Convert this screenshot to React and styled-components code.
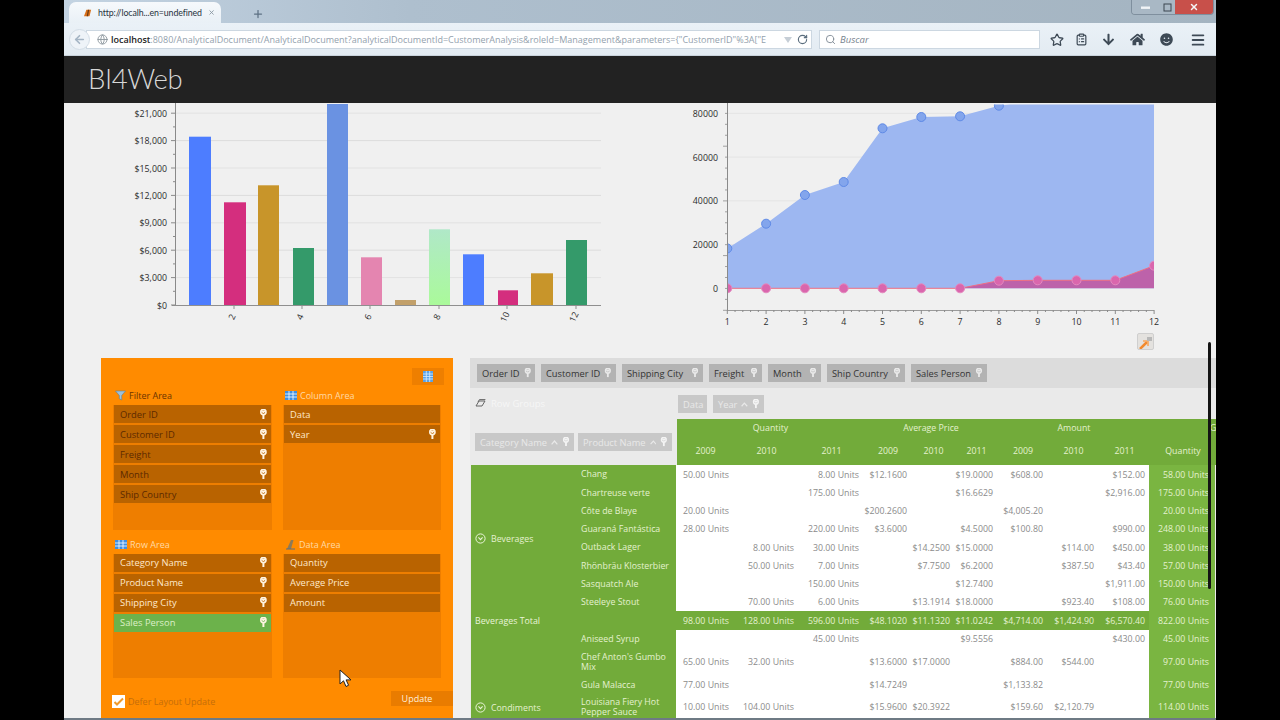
import React from 'react';
import styled, { createGlobalStyle } from 'styled-components';
import { ArrowLeft, ClipboardList, Globe, Menu, RotateCw, Search, Star, X, Plus } from 'lucide-react';
import { FaArrowDown, FaHome, FaSmile } from 'react-icons/fa';

const GREEN = '#72ab3a';
const UI_FONT = '"Open Sans", "Noto Sans", sans-serif';

const GlobalStyle = createGlobalStyle`
  html, body { margin: 0; height: 100%; background: #000; }
  #root { height: 100%; }
  * { box-sizing: border-box; }
`;

const Screen = styled.div`
  display: flex;
  justify-content: center;
  width: 1280px;
  height: 720px;
  overflow: hidden;
  background: #000;
  font-family: ${UI_FONT};
`;

const Stage = styled.div`
  display: flex;
  flex-direction: column;
  width: 1152px;
  height: 720px;
  background: #f0f0f0;
`;

/* browser chrome */
const TitleBar = styled.div`
  display: flex;
  align-items: flex-end;
  height: 23px;
  padding-left: 5px;
  background: linear-gradient(90deg, #c3d3e2 0%, #aebfce 30%, #a4b4c1 100%);
`;

const Tab = styled.div`
  display: flex;
  align-items: center;
  gap: 6px;
  width: 152px;
  height: 21px;
  padding: 0 6px 0 15px;
  border-radius: 7px 7px 0 0;
  background: linear-gradient(#f6f9fc, #e9f0f6);
  font-family: Lato, ${UI_FONT};
  font-size: 8.8px;
  letter-spacing: -0.1px;
  color: #26323c;
  white-space: nowrap;
`;

const TabTitle = styled.span`
  flex: 1;
`;

const NewTab = styled.div`
  display: flex;
  align-items: center;
  margin: 0 0 3px 31px;
  color: #5d7184;
`;

const WindowButtons = styled.div`
  display: flex;
  align-self: flex-start;
  height: 15px;
  margin-left: auto;
  margin-right: 2px;
  border-radius: 0 0 4px 4px;
  border: 1px solid #7f8f9e;
  border-top: 0;
  overflow: hidden;
`;

const WindowButton = styled.div`
  display: flex;
  align-items: center;
  justify-content: center;
  width: ${(p) => p.$w}px;
  background: ${(p) => p.$bg};
  color: #f4f6f8;
`;

const NavBar = styled.div`
  display: flex;
  align-items: center;
  height: 33px;
  padding: 1px 0 0 5px;
  background: linear-gradient(#eaf1f7, #e3ebf2);
  border-bottom: 1px solid #c9d3dc;
`;

const BackButton = styled.div`
  display: flex;
  align-items: center;
  justify-content: center;
  width: 21px;
  height: 21px;
  border-radius: 50%;
  border: 1px solid #d3dde6;
  background: #eef3f8;
  color: #a4b4c4;
  z-index: 1;
`;

const UrlBox = styled.div`
  display: flex;
  align-items: center;
  gap: 3px;
  width: 726px;
  height: 19px;
  margin-left: -4px;
  padding: 0 3px 0 10px;
  background: #fff;
  border: 1px solid #ccd7e1;
  color: #93a1ad;
  font-size: 9px;
  white-space: nowrap;
`;

const UrlText = styled.div`
  flex: 1;
`;

const UrlHost = styled.span`
  color: #222;
  font-weight: 600;
`;

const Caret = styled.span`
  width: 0;
  height: 0;
  margin-right: 2px;
  border-left: 4px solid transparent;
  border-right: 4px solid transparent;
  border-top: 6px solid #c6ced6;
`;

const SearchBox = styled.div`
  display: flex;
  align-items: center;
  gap: 4px;
  width: 221px;
  height: 19px;
  margin-left: 7px;
  padding-left: 5px;
  background: #fff;
  border: 1px solid #ccd7e1;
  color: #77838e;
  font-size: 9.5px;
  font-style: italic;
`;

const NavIcons = styled.div`
  display: grid;
  grid-template-columns: 22px 26px 28px 30px 28px 36px;
  justify-items: center;
  align-items: center;
  margin-left: 6px;
  color: #3e4a56;
`;

const AppHeader = styled.div`
  display: flex;
  align-items: center;
  height: 47px;
  padding: 0 0 2px 24px;
  background: #222;
  color: #d8d8d8;
  font-family: Lato, ${UI_FONT};
  font-weight: 300;
  font-size: 27.5px;
  letter-spacing: -0.4px;
`;

const Content = styled.div`
  position: relative;
  flex: 1;
  min-height: 0;
  overflow: hidden;
`;

const Scrollbar = styled.div`
  position: absolute;
  top: 239px;
  left: 1144px;
  width: 3px;
  height: 247px;
  border-radius: 2px;
  background: #141414;
`;

const Cursor = styled.svg`
  position: absolute;
  top: 566px;
  left: 275px;
  width: 13px;
  height: 19px;
`;

const BottomEdge = styled.div`
  height: 2px;
  background: #6e7a84;
`;

/* charts */
const ChartsRow = styled.div`
  display: flex;
  height: 255px;
`;

const BarChartBox = styled.div`
  width: 556px;
  padding-left: 56px;
`;

const AreaChartBox = styled.div`
  display: flex;
  flex-direction: column;
  width: 596px;
  padding-left: 44px;
`;

const ChartFoot = styled.div`
  display: flex;
  justify-content: flex-end;
  padding-right: 62px;
`;

const ExportButton = styled.div`
  width: 17px;
  height: 17px;
  border: 1px solid #cfcfcf;
  border-radius: 2px;
  background: #e4e2df;
  overflow: hidden;
`;

const AxisLabel = styled.text`
  font-family: ${UI_FONT};
  font-size: 8.8px;
  fill: #2c2c2c;
`;

const BARS = [
  [189, 211, 33.7, '#4d7dff'],
  [224, 246, 99.3, '#d42e7e'],
  [258, 279, 82.3, '#c8952a'],
  [293, 314, 145, '#349a6a'],
  [327, 348, 1, '#6a92e2'],
  [361, 382, 154.3, '#e485b0'],
  [395, 416, 197, '#c2a06a'],
  [429, 450, 126.3, 'url(#mint)'],
  [463, 484, 151.3, '#4d7dff'],
  [498, 518, 187.3, '#d42e7e'],
  [531, 553, 170.3, '#c8952a'],
  [566, 587, 137, '#349a6a'],
];

const BarChart = () => {
  const y0 = 202;
  const step = 27.4;
  return (
    <svg width="500" height="255" viewBox="120 0 500 255">
      <defs>
        <linearGradient id="mint" x1="0" y1="0" x2="0" y2="1">
          <stop offset="0" stopColor="#b0e8c8" />
          <stop offset="1" stopColor="#aafa9a" />
        </linearGradient>
      </defs>
      {[1, 2, 3, 4, 5, 6, 7].map((i) => (
        <line key={i} x1="175" x2="601" y1={y0 - step * i} y2={y0 - step * i} stroke={i % 2 ? '#e2e2e2' : '#dcdcdc'} />
      ))}
      {BARS.map(([a, b, top, c]) => (
        <rect key={a} x={a} y={top} width={b - a} height={y0 - top} fill={c} />
      ))}
      <line x1="175.5" x2="175.5" y1="0" y2={y0} stroke="#8a8a8a" />
      <line x1="172" x2="601" y1={y0 + 0.5} y2={y0 + 0.5} stroke="#8f8f8f" />
      {Array.from({ length: 15 }).map((_, i) => (
        <line key={i} x1={i % 2 ? 173 : 171} x2="175" y1={y0 - (step / 2) * i} y2={y0 - (step / 2) * i} stroke="#8a8a8a" />
      ))}
      {['$0', '$3,000', '$6,000', '$9,000', '$12,000', '$15,000', '$18,000', '$21,000'].map((t, i) => (
        <AxisLabel key={t} x="167" y={y0 + 3.5 - step * i} textAnchor="end">{t}</AxisLabel>
      ))}
      {[['2', 234], ['4', 302], ['6', 370], ['8', 439], ['10', 507], ['12', 576]].map(([t, x]) => (
        <g key={t}>
          <line x1={x} x2={x} y1={y0} y2={y0 + 4} stroke="#8f8f8f" />
          <AxisLabel x={x - 2} y={y0 + 15} textAnchor="middle" transform={`rotate(-65 ${x - 2} ${y0 + 12})`}>{t}</AxisLabel>
        </g>
      ))}
    </svg>
  );
};

const X0 = 727.3;
const XSTEP = 38.8;
const px = (i) => X0 + XSTEP * i;
const BLUE_Y = [145.4, 120.7, 92, 79, 25.3, 14, 13.3, 2.7, -3, -3, -3, -3];
const PINK_Y = [185.3, 185.3, 185.3, 185.3, 185.3, 185.3, 185.3, 177.7, 177.3, 177.3, 177.3, 162.7];

const AreaChart = () => {
  const y0 = 185.3;
  const blue = BLUE_Y.map((y, i) => `${px(i)},${y}`).join(' ');
  const pink = PINK_Y.map((y, i) => `${px(i)},${y}`).join(' ');
  return (
    <svg width="530" height="230" viewBox="664 0 530 230">
      <defs>
        <clipPath id="plot">
          <rect x="727.5" y="1.5" width="426.5" height="200" />
        </clipPath>
      </defs>
      {[1, 2, 3, 4].map((i) => (
        <line key={i} x1="727" x2="1154" y1={y0 - 43.75 * i} y2={y0 - 43.75 * i} stroke="#e4e4e4" />
      ))}
      <g clipPath="url(#plot)">
        <polygon points={`${X0},${y0} ${blue} ${px(11)},${y0}`} fill="#9db7f1" />
        <polygon points={`${X0},${y0} ${pink} ${px(11)},${y0}`} fill="#bd62aa" />
        <polyline points={pink} fill="none" stroke="#ee6f84" strokeWidth="1" />
        {[0, 1, 2, 3, 4, 5, 6, 7].map((i) => (
          <circle key={i} cx={px(i)} cy={BLUE_Y[i]} r="4.5" fill="#83a5ec" stroke="#5f8ae6" />
        ))}
        {PINK_Y.map((y, i) => (
          <circle key={i} cx={px(i)} cy={y} r="4.5" fill="#da66ad" stroke="#e489bf" />
        ))}
      </g>
      <line x1="727.5" x2="727.5" y1="0" y2="207" stroke="#8a8a8a" />
      {Array.from({ length: 20 }).map((_, i) => (
        <line key={i} x1={i % 5 ? 725 : 723} x2="727" y1={y0 + 22 - 10.94 * i} y2={y0 + 22 - 10.94 * i} stroke="#a0a0a0" />
      ))}
      <line x1="727" x2="1154" y1="207.5" y2="207.5" stroke="#9a9a9a" />
      {Array.from({ length: 56 }).map((_, i) => (
        <line key={i} x1={X0 + (XSTEP / 5) * i} x2={X0 + (XSTEP / 5) * i} y1="207" y2={i % 5 ? 209 : 211} stroke="#8a8a8a" />
      ))}
      {[0, 20000, 40000, 60000, 80000].map((t, i) => (
        <AxisLabel key={t} x="718" y={y0 + 3.5 - 43.75 * i} textAnchor="end">{t}</AxisLabel>
      ))}
      {Array.from({ length: 12 }).map((_, i) => (
        <AxisLabel key={i} x={px(i)} y="222" textAnchor="middle">{i + 1}</AxisLabel>
      ))}
    </svg>
  );
};

/* orange field list */
const LowerRow = styled.div`
  display: flex;
  height: 360px;
  margin-left: 37px;
  gap: 17px;
`;

const FieldPanel = styled.div`
  display: flex;
  flex-direction: column;
  flex: none;
  width: 352px;
  padding-top: 10px;
  background: #ff8b00;
`;

const PanelTools = styled.div`
  display: flex;
  justify-content: flex-end;
  padding-right: 9px;
`;

const LayoutButton = styled.div`
  display: flex;
  align-items: center;
  justify-content: center;
  width: 32px;
  height: 17px;
  background: #ee7f00;
`;

const AreaGrid = styled.div`
  display: grid;
  grid-template-columns: 159px 158px;
  column-gap: 11px;
  row-gap: 5px;
  padding-left: 12px;
`;

const Area = styled.div`
  display: flex;
  flex-direction: column;
`;

const AreaLabel = styled.div`
  display: flex;
  align-items: center;
  gap: 3px;
  height: ${(p) => (p.$low ? 19 : 20)}px;
  padding-left: 2px;
  font-size: 9px;
  color: ${(p) => (p.$dark ? '#6b3400' : '#ffd9a6')};
`;

const Well = styled.div`
  display: flex;
  flex-direction: column;
  gap: 2px;
  height: 124.5px;
  padding: 0 1px;
  background: #ee7e00;
`;

const FieldRow = styled.div`
  display: flex;
  align-items: center;
  justify-content: space-between;
  height: 18px;
  padding: 0 3px 0 6px;
  font-size: 9.4px;
  background: ${(p) => (p.$active ? '#6cb24b' : '#b96300')};
  color: ${(p) => (p.$dark ? '#5c2a00' : p.$active ? '#dcefc8' : '#ffe9cc')};
`;

const PanelFoot = styled.div`
  display: flex;
  align-items: flex-start;
  justify-content: space-between;
  margin-top: 13px;
  padding-left: 11px;
`;

const DeferLabel = styled.label`
  display: flex;
  align-items: center;
  gap: 3px;
  margin-top: 4px;
  font-size: 9px;
  color: #c56d0a;
`;

const CheckBox = styled.span`
  display: flex;
  align-items: center;
  justify-content: center;
  width: 13px;
  height: 13px;
  background: #fff;
`;

const UpdateButton = styled.div`
  display: flex;
  align-items: center;
  justify-content: center;
  width: 62px;
  height: 15px;
  padding-right: 10px;
  background: #e97c00;
  color: #ffeeda;
  font-size: 9px;
`;

/* pivot grid */
const Pivot = styled.div`
  flex: 1;
  min-width: 0;
  background: #eaeaea;
`;

const FilterBar = styled.div`
  display: flex;
  align-items: center;
  gap: 6px;
  height: 30px;
  padding: 0 7px;
  background: #dcdcdc;
`;

const Chip = styled.div`
  display: flex;
  align-items: center;
  justify-content: space-between;
  gap: 4px;
  width: ${(p) => p.$w}px;
  height: 18px;
  padding: 0 4px 0 5px;
  font-size: 9.3px;
  white-space: nowrap;
  background: ${(p) => (p.$faded ? '#c8c8c8' : '#b3b3b3')};
  color: ${(p) => (p.$faded ? '#e9e9e9' : '#343434')};
`;

const PivotHead = styled.div`
  display: grid;
  grid-template-columns: 207px 1fr;
  height: 77px;
`;

const RowHeadArea = styled.div`
  display: flex;
  flex-direction: column;
  justify-content: space-between;
  padding: 8px 0 14px 5px;
`;

const RowGroupHint = styled.div`
  display: flex;
  align-items: center;
  gap: 5px;
  height: 14px;
  font-size: 9.5px;
  color: #f6f6f6;
`;

const ChipRow = styled.div`
  display: flex;
  gap: ${(p) => p.$gap}px;
`;

const ColHeadArea = styled.div`
  display: flex;
  flex-direction: column;
  min-width: 0;
`;

const ColChips = styled.div`
  display: flex;
  gap: 6px;
  height: 31px;
  padding: 7px 0 0 1px;
`;

const ColumnHead = styled.div`
  display: grid;
  grid-template-columns: 57px 65px 65px 48px 43px 43px 50px 51px 51px 66px;
  grid-template-rows: 18px 28px;
  background: ${GREEN};
  color: #e4f1cf;
  font-size: 8.8px;
  text-align: center;
  overflow: hidden;
`;

const HeadCell = styled.div`
  grid-column: span ${(p) => p.$span || 1};
  align-self: center;
  white-space: nowrap;
`;

const GrandHead = styled(HeadCell)`
  padding-left: 60px;
  text-align: left;
`;

const Table = styled.div`
  display: grid;
  grid-template-columns: 105px 100px 57px 65px 65px 48px 43px 43px 50px 51px 51px 66px;
  grid-template-rows: repeat(8, 18.25px) 18.5px 18.25px 27.5px 18px 27px;
  margin-left: 1px;
  font-size: 8.8px;
`;

const GroupCell = styled.div`
  grid-row: span ${(p) => p.$rows};
  display: flex;
  align-items: ${(p) => (p.$top ? 'flex-start' : 'center')};
  gap: 5px;
  padding: ${(p) => p.$top || 1}px 0 0 4px;
  background: ${GREEN};
  color: #e4f1cf;
`;

const TotalLabel = styled.div`
  grid-column: span 2;
  display: flex;
  align-items: center;
  padding: 1px 0 0 4px;
  background: ${GREEN};
  color: #e9f4d8;
`;

const ProductCell = styled.div`
  grid-column: 2;
  display: flex;
  align-items: center;
  padding: 1px 4px 0 5px;
  line-height: 10.5px;
  background: ${GREEN};
  color: #e4f1cf;
`;

const ValueCell = styled.div`
  display: flex;
  align-items: center;
  justify-content: flex-end;
  padding: 1px ${(p) => (p.$grand ? 6 : 4)}px 0 0;
  white-space: nowrap;
  background: ${(p) => (p.$grand ? '#7ab541' : p.$total ? GREEN : '#fff')};
  color: ${(p) => (p.$grand || p.$total ? '#e4f1cf' : '#8b8b8b')};
`;

const FilterPin = ({ color = '#fff4e2', size = 11 }) => (
  <svg width={size * 0.8} height={size} viewBox="0 0 8 11">
    <circle cx="4" cy="3" r="2.6" fill="none" stroke={color} strokeWidth="1.6" />
    <path d="M3 5.4h2V10H3z" fill={color} />
    <path d="M1 1.6h6L4.5 4h-1z" fill={color} />
  </svg>
);

const SortUp = () => (
  <svg width="7" height="5" viewBox="0 0 7 5">
    <path d="M.6 4.3 3.5 1l2.9 3.3" fill="none" stroke="currentColor" strokeWidth="1.2" />
  </svg>
);

const Expand = () => (
  <svg width="11" height="11" viewBox="0 0 11 11">
    <circle cx="5.5" cy="5.5" r="4.6" fill="none" stroke="#eaf5d9" />
    <path d="M3.4 4.4 5.5 6.6l2.1-2.2" fill="none" stroke="#eaf5d9" strokeWidth="1.1" />
  </svg>
);

const GridGlyph = ({ color = '#3f8fe0', w = 12, h = 9 }) => (
  <svg width={w} height={h} viewBox="0 0 12 9">
    <rect width="12" height="9" fill={color} />
    <path d="M0 3h12M0 6h12M4 0v9M8 0v9" stroke="#fff" strokeWidth=".8" />
  </svg>
);

const FunnelGlyph = () => (
  <svg width="11" height="11" viewBox="0 0 11 11">
    <path d="M.5 1h10L6.7 5.5V10L4.3 8.6V5.5z" fill="#9fc0d8" stroke="#5e7f96" strokeWidth=".6" />
  </svg>
);

const SigmaGlyph = () => (
  <svg width="11" height="11" viewBox="0 0 11 11">
    <path d="M2 10 6 1h2.5L6 10z" fill="#8d7a58" />
    <path d="M1 10h9" stroke="#5c6f80" />
  </svg>
);

const LayoutGlyph = () => (
  <svg width="10" height="11" viewBox="0 0 10 11">
    <rect width="10" height="11" fill="#5aa2e6" />
    <path d="M0 3h10M0 5.5h10M0 8h10M3.3 0v11M6.7 0v11" stroke="#d9ecfb" strokeWidth=".8" />
  </svg>
);

const Favicon = () => (
  <svg width="10" height="10" viewBox="0 0 10 10">
    <path d="M3 1h6L7 9H0z" fill="#d9701a" />
    <path d="M5 1h1.6L5 9H3.4z" fill="#6b3a12" />
  </svg>
);

const FieldArea = ({ label, glyph, names, dark, low, activeName, pinned }) => (
  <Area>
    <AreaLabel $dark={dark} $low={low}>
      {glyph}
      {label}
    </AreaLabel>
    <Well>
      {names.map((name) => (
        <FieldRow key={name} $dark={dark} $active={name === activeName}>
          {name}
          {pinned.includes(name) && <FilterPin />}
        </FieldRow>
      ))}
    </Well>
  </Area>
);

const FILTER_CHIPS = [
  ['Order ID', 58], ['Customer ID', 75], ['Shipping City', 81], ['Freight', 53],
  ['Month', 53], ['Ship Country', 78], ['Sales Person', 76],
];

const U = (n) => (n ? `${n} Units` : '');

const row = (name, q, m, a, g) => ({
  name,
  cells: [U(q[0]), U(q[1]), U(q[2]), ...m, ...a, U(g)],
});

const BEVERAGES = [
  row('Chang', ['50.00', '', '8.00'], ['$12.1600', '', '$19.0000'], ['$608.00', '', '$152.00'], '58.00'),
  row('Chartreuse verte', ['', '', '175.00'], ['', '', '$16.6629'], ['', '', '$2,916.00'], '175.00'),
  row('Côte de Blaye', ['20.00', '', ''], ['$200.2600', '', ''], ['$4,005.20', '', ''], '20.00'),
  row('Guaraná Fantástica', ['28.00', '', '220.00'], ['$3.6000', '', '$4.5000'], ['$100.80', '', '$990.00'], '248.00'),
  row('Outback Lager', ['', '8.00', '30.00'], ['', '$14.2500', '$15.0000'], ['', '$114.00', '$450.00'], '38.00'),
  row('Rhönbräu Klosterbier', ['', '50.00', '7.00'], ['', '$7.7500', '$6.2000'], ['', '$387.50', '$43.40'], '57.00'),
  row('Sasquatch Ale', ['', '', '150.00'], ['', '', '$12.7400'], ['', '', '$1,911.00'], '150.00'),
  row('Steeleye Stout', ['', '70.00', '6.00'], ['', '$13.1914', '$18.0000'], ['', '$923.40', '$108.00'], '76.00'),
];

const BEV_TOTAL = ['98.00 Units', '128.00 Units', '596.00 Units', '$48.1020', '$11.1320', '$11.0242', '$4,714.00', '$1,424.90', '$6,570.40', '822.00 Units'];

const CONDIMENTS = [
  row('Aniseed Syrup', ['', '', '45.00'], ['', '', '$9.5556'], ['', '', '$430.00'], '45.00'),
  row("Chef Anton's Gumbo Mix", ['65.00', '32.00', ''], ['$13.6000', '$17.0000', ''], ['$884.00', '$544.00', ''], '97.00'),
  row('Gula Malacca', ['77.00', '', ''], ['$14.7249', '', ''], ['$1,133.82', '', ''], '77.00'),
  row('Louisiana Fiery Hot Pepper Sauce', ['10.00', '104.00', ''], ['$15.9600', '$20.3922', ''], ['$159.60', '$2,120.79', ''], '114.00'),
];

const Values = ({ cells, total }) =>
  cells.map((c, i) => (
    <ValueCell key={i} $total={total} $grand={i === 9}>{c}</ValueCell>
  ));

const YEARS = ['2009', '2010', '2011', '2009', '2010', '2011', '2009', '2010', '2011'];

const FILTER_NAMES = ['Order ID', 'Customer ID', 'Freight', 'Month', 'Ship Country'];
const ROW_NAMES = ['Category Name', 'Product Name', 'Shipping City', 'Sales Person'];

const App = () => (
  <>
    <GlobalStyle />
    <Screen>
      <Stage>
        <TitleBar>
          <Tab>
            <Favicon />
            <TabTitle>http://localh...en=undefined</TabTitle>
            <X size={9} color="#8a97a3" strokeWidth={3} />
          </Tab>
          <NewTab><Plus size={12} strokeWidth={2.5} /></NewTab>
          <WindowButtons>
            <WindowButton $w={27} $bg="#a9b8c5"><svg width="9" height="3"><rect width="9" height="2.4" y=".5" fill="#f1f4f7" /></svg></WindowButton>
            <WindowButton $w={16} $bg="#a9b8c5"><svg width="9" height="9" viewBox="0 0 9 9"><rect x="1" y="1" width="7" height="7" fill="none" stroke="#3c4650" /></svg></WindowButton>
            <WindowButton $w={38} $bg="#c8504a"><X size={10} strokeWidth={3.5} /></WindowButton>
          </WindowButtons>
        </TitleBar>
        <NavBar>
          <BackButton><ArrowLeft size={13} strokeWidth={3} /></BackButton>
          <UrlBox>
            <Globe size={11} color="#8e989f" />
            <UrlText>
              <UrlHost>localhost</UrlHost>:8080/AnalyticalDocument/AnalyticalDocument?analyticalDocumentId=CustomerAnalysis&amp;roleId=Management&amp;parameters={'{'}"CustomerID"%3A["E
            </UrlText>
            <Caret />
            <RotateCw size={11} color="#5a6d7d" strokeWidth={2.5} />
          </UrlBox>
          <SearchBox><Search size={11} color="#7f8a95" />Buscar</SearchBox>
          <NavIcons>
            <Star size={14} strokeWidth={2.2} />
            <ClipboardList size={13} strokeWidth={2.2} />
            <FaArrowDown size={13} />
            <FaHome size={15} />
            <FaSmile size={13} />
            <Menu size={16} strokeWidth={2.8} />
          </NavIcons>
        </NavBar>
        <AppHeader>BI4Web</AppHeader>
        <Content>
          <ChartsRow>
            <BarChartBox><BarChart /></BarChartBox>
            <AreaChartBox>
              <AreaChart />
              <ChartFoot>
                <ExportButton>
                  <svg width="15" height="15" viewBox="0 0 15 15">
                    <path d="M2 13 9 6" stroke="#f28a2e" strokeWidth="2.5" />
                    <path d="M5 5h5v5" fill="none" stroke="#f7a85e" strokeWidth="1.6" />
                    <rect x="9" y="1" width="5" height="4" fill="#b8b8b8" />
                  </svg>
                </ExportButton>
              </ChartFoot>
            </AreaChartBox>
          </ChartsRow>
          <LowerRow>
            <FieldPanel>
              <PanelTools><LayoutButton><LayoutGlyph /></LayoutButton></PanelTools>
              <AreaGrid>
                <FieldArea dark label="Filter Area" glyph={<FunnelGlyph />} names={FILTER_NAMES} pinned={FILTER_NAMES} />
                <FieldArea label="Column Area" glyph={<GridGlyph />} names={['Data', 'Year']} pinned={['Year']} />
                <FieldArea low label="Row Area" glyph={<GridGlyph />} activeName="Sales Person" names={ROW_NAMES} pinned={ROW_NAMES} />
                <FieldArea low label="Data Area" glyph={<SigmaGlyph />} names={['Quantity', 'Average Price', 'Amount']} pinned={[]} />
              </AreaGrid>
              <PanelFoot>
                <DeferLabel>
                  <CheckBox>
                    <svg width="11" height="9" viewBox="0 0 11 9"><path d="M1.5 5 4 7.5 10 1.5" fill="none" stroke="#f09a2a" strokeWidth="2" /></svg>
                  </CheckBox>
                  Defer Layout Update
                </DeferLabel>
                <UpdateButton>Update</UpdateButton>
              </PanelFoot>
            </FieldPanel>
            <Pivot>
              <FilterBar>
                {FILTER_CHIPS.map(([name, w]) => (
                  <Chip key={name} $w={w}>{name}<FilterPin size={10} color="#e9e9e9" /></Chip>
                ))}
              </FilterBar>
              <PivotHead>
                <RowHeadArea>
                  <RowGroupHint>
                    <svg width="11" height="8" viewBox="0 0 11 8">
                      <path d="M1 7h6l3-5H4zM3 3l1.4-2.4h6" fill="none" stroke="#666" />
                    </svg>
                    Row Groups
                  </RowGroupHint>
                  <ChipRow $gap={4}>
                    <Chip $faded $w={99}>Category Name <SortUp /><FilterPin size={10} color="#f4f4f4" /></Chip>
                    <Chip $faded $w={94}>Product Name <SortUp /><FilterPin size={10} color="#f4f4f4" /></Chip>
                  </ChipRow>
                </RowHeadArea>
                <ColHeadArea>
                  <ColChips>
                    <Chip $faded $w={29}>Data</Chip>
                    <Chip $faded $w={51}>Year <SortUp /><FilterPin size={10} color="#f4f4f4" /></Chip>
                  </ColChips>
                  <ColumnHead>
                    <HeadCell $span={3}>Quantity</HeadCell>
                    <HeadCell $span={3}>Average Price</HeadCell>
                    <HeadCell $span={3}>Amount</HeadCell>
                    <GrandHead>Grand Total</GrandHead>
                    {YEARS.map((y, i) => (
                      <HeadCell key={i}>{y}</HeadCell>
                    ))}
                    <HeadCell>Quantity</HeadCell>
                  </ColumnHead>
                </ColHeadArea>
              </PivotHead>
              <Table>
                <GroupCell $rows={8}><Expand />Beverages</GroupCell>
                {BEVERAGES.map((r) => (
                  <React.Fragment key={r.name}>
                    <ProductCell>{r.name}</ProductCell>
                    <Values cells={r.cells} />
                  </React.Fragment>
                ))}
                <TotalLabel>Beverages Total</TotalLabel>
                <Values cells={BEV_TOTAL} total />
                <GroupCell $rows={4} $top={72}><Expand />Condiments</GroupCell>
                {CONDIMENTS.map((r) => (
                  <React.Fragment key={r.name}>
                    <ProductCell>{r.name}</ProductCell>
                    <Values cells={r.cells} />
                  </React.Fragment>
                ))}
              </Table>
            </Pivot>
          </LowerRow>
          <Scrollbar />
          <Cursor viewBox="0 0 13 19">
            <path d="M1 1v14l3.500-3.200 2.500 5.700 2.600-1.200-2.500-5.400H12z" fill="#fff" stroke="#222" strokeWidth="1" />
          </Cursor>
        </Content>
        <BottomEdge />
      </Stage>
    </Screen>
  </>
);

export default App;
